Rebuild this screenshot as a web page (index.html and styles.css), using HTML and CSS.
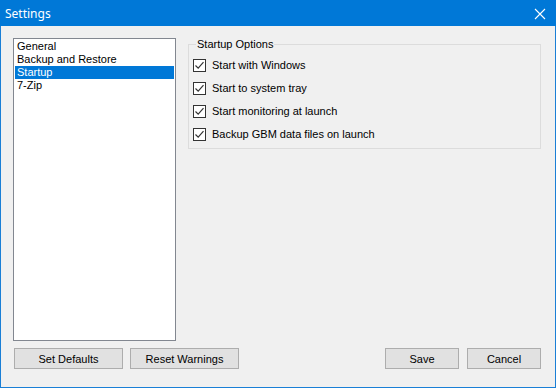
FILE: index.html
```html
<!DOCTYPE html>
<html>
<head>
<meta charset="utf-8">
<link rel="stylesheet" href="styles.css">
</head>
<body>
<div class="window">
  <div class="titlebar">
    <span class="title">Settings</span>
    <svg class="close" width="12" height="12" viewBox="0 0 12 12"><path d="M1 1 L11 11 M11 1 L1 11" stroke="#fff" stroke-width="1.1" fill="none"/></svg>
  </div>
  <div class="client">
    <div class="main">
      <div class="listbox">
        <div class="item">General</div>
        <div class="item">Backup and Restore</div>
        <div class="item selected">Startup</div>
        <div class="item">7-Zip</div>
      </div>
      <div class="panel">
        <div class="group">
          <div class="group-title">Startup Options</div>
          <div class="checks">
            <div class="check"><span class="box"><svg width="11" height="11" viewBox="0 0 11 11"><path d="M1.5 5.5 L4.2 8.2 L9.5 2.2" stroke="#333" stroke-width="1.2" fill="none"/></svg></span>Start with Windows</div>
            <div class="check"><span class="box"><svg width="11" height="11" viewBox="0 0 11 11"><path d="M1.5 5.5 L4.2 8.2 L9.5 2.2" stroke="#333" stroke-width="1.2" fill="none"/></svg></span>Start to system tray</div>
            <div class="check"><span class="box"><svg width="11" height="11" viewBox="0 0 11 11"><path d="M1.5 5.5 L4.2 8.2 L9.5 2.2" stroke="#333" stroke-width="1.2" fill="none"/></svg></span>Start monitoring at launch</div>
            <div class="check"><span class="box"><svg width="11" height="11" viewBox="0 0 11 11"><path d="M1.5 5.5 L4.2 8.2 L9.5 2.2" stroke="#333" stroke-width="1.2" fill="none"/></svg></span>Backup GBM data files on launch</div>
          </div>
        </div>
      </div>
    </div>
    <div class="buttons">
      <div class="btn-group">
        <button class="btn wide">Set Defaults</button>
        <button class="btn wide">Reset Warnings</button>
      </div>
      <div class="btn-group">
        <button class="btn">Save</button>
        <button class="btn">Cancel</button>
      </div>
    </div>
  </div>
</div>
</body>
</html>
```
FILE: styles.css
```css
* { box-sizing: border-box; }
html, body { margin: 0; padding: 0; }
body {
  width: 556px;
  height: 388px;
  overflow: hidden;
  font-family: "Liberation Sans", Arial, sans-serif;
  font-size: 11px;
  color: #000;
}
.window {
  width: 556px;
  height: 388px;
  border: 1px solid #1a7fd6;
  border-top: none;
  background: #f0f0f0;
  display: flex;
  flex-direction: column;
}
.titlebar {
  height: 26px;
  margin: 0 -1px;
  background: #0078d7;
  display: flex;
  align-items: center;
  justify-content: space-between;
  padding: 0 10px 0 5px;
  color: #fff;
}
.title {
  font-family: "Noto Sans", "Open Sans", sans-serif;
  font-size: 12px;
}
.close { display: block; margin-top: 1px; }
.client {
  flex: 1;
  display: flex;
  flex-direction: column;
  padding: 12px 14px 0 12px;
}
.main {
  display: flex;
  height: 303px;
}
.listbox {
  width: 163px;
  height: 303px;
  border: 1px solid #828790;
  background: #fff;
  padding: 1px 1px 0 1px;
}
.item {
  height: 13px;
  line-height: 13px;
  padding-left: 2px;
  white-space: nowrap;
}
.item.selected {
  background: #0078d7;
  color: #fff;
}
.panel {
  flex: 1;
  padding-left: 12px;
  padding-top: 6px;
}
.group {
  border: 1px solid #dcdcdc;
  height: 105px;
  padding: 0 0 0 4px;
}
.group-title {
  margin: -7px 0 0 3px;
  padding: 0 1px;
  width: fit-content;
  background: #f0f0f0;
  line-height: 13px;
}
.checks {
  display: flex;
  flex-direction: column;
  gap: 10px;
  padding-top: 8px;
}
.check {
  display: flex;
  align-items: center;
  height: 13px;
  line-height: 13px;
  white-space: nowrap;
}
.box {
  width: 13px;
  height: 13px;
  border: 1px solid #333;
  background: #fff;
  margin-right: 6px;
  display: flex;
  align-items: center;
  justify-content: center;
}
.box svg { display: block; }
.buttons {
  display: flex;
  justify-content: space-between;
  padding-top: 7px;
  padding-left: 1px;
}
.btn-group { display: flex; gap: 7px; }
.btn-group + .btn-group { gap: 8px; }
.btn {
  font-family: "Liberation Sans", Arial, sans-serif;
  font-size: 11px;
  color: #000;
  height: 21px;
  width: 74px;
  background: #e1e1e1;
  border: 1px solid #adadad;
  padding: 0;
  margin: 0;
}
.btn.wide { width: 109px; }
```
